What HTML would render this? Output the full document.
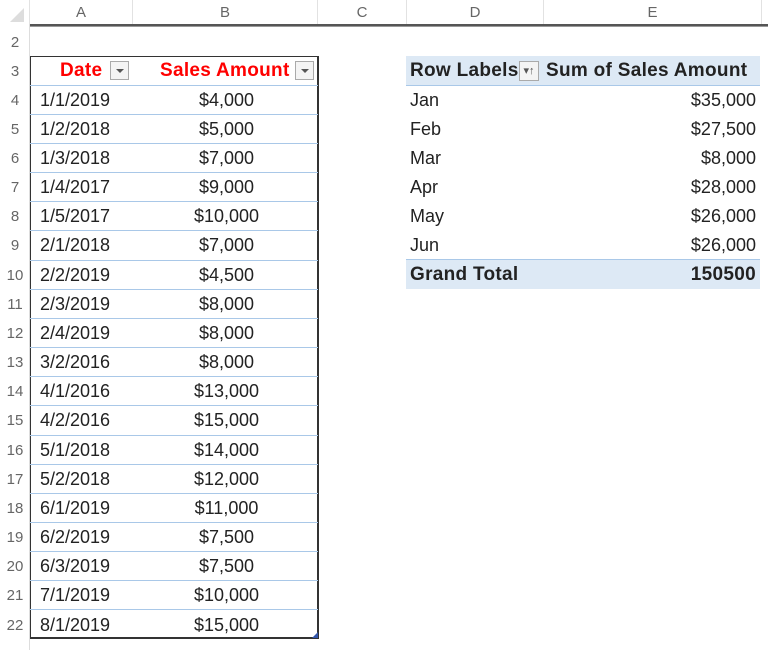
<!DOCTYPE html>
<html><head><meta charset="utf-8"><style>
body{margin:0;width:768px;height:650px;background:#fff;position:relative;overflow:hidden;font-family:"Liberation Sans",Arial,sans-serif;font-size:18px;color:#222}
div{position:absolute;box-sizing:border-box}
.ch{top:0;height:25px;color:#666;font-size:15px;text-align:center;line-height:25px;border-right:1px solid #e2e2e2}
.rn{left:0;width:30px;color:#666;font-size:15px;text-align:center;margin-top:2px}
.sep{left:30px;width:288px;height:1px;background:#a9c8e8}
.t{white-space:nowrap}
.b{font-weight:bold;font-size:19px;letter-spacing:0.3px}
.dd{width:19px;height:19px;border:1px solid #aaa;background:#f4f4f4}
.dd:after{content:"";position:absolute;left:5px;top:7px;border-left:4px solid transparent;border-right:4px solid transparent;border-top:4px solid #555}
</style></head><body>
<div style="left:0;top:0;width:30px;height:25px;border-right:1px solid #e2e2e2"></div>
<div style="left:10px;top:8px;width:0;height:0;border-left:14px solid transparent;border-bottom:14px solid #ddd"></div>
<div class="ch" style="left:30px;width:103px">A</div>
<div class="ch" style="left:133px;width:185px">B</div>
<div class="ch" style="left:318px;width:89px">C</div>
<div class="ch" style="left:407px;width:137px">D</div>
<div class="ch" style="left:544px;width:218px">E</div>
<div style="left:30px;top:24px;width:738px;height:3px;background:#555;border-bottom:1px solid #999"></div>
<div style="left:29px;top:24px;width:1px;height:626px;background:#ddd"></div>
<div class="rn" style="top:32px">2</div>
<div style="left:30px;top:56px;width:289px;height:583px;border:1px solid #333;border-right-width:2px;border-bottom-width:2px"></div>
<div style="left:312px;top:632px;width:0;height:0;border-left:6px solid transparent;border-bottom:6px solid #3355aa"></div>
<div class="rn" style="top:61px">3</div>
<div class="t b" style="left:60px;top:60px;color:#f00">Date</div>
<div class="dd" style="left:110px;top:61px"></div>
<div class="t b" style="left:160px;top:60px;color:#f00">Sales Amount</div>
<div class="dd" style="left:295px;top:61px"></div>
<div class="sep" style="top:85px"></div>

<div class="rn" style="top:90px">4</div><div class="t" style="left:40px;top:90px">1/1/2019</div><div class="t" style="left:135px;width:183px;text-align:center;top:90px">$4,000</div><div class="sep" style="top:114px"></div>
<div class="rn" style="top:119px">5</div><div class="t" style="left:40px;top:119px">1/2/2018</div><div class="t" style="left:135px;width:183px;text-align:center;top:119px">$5,000</div><div class="sep" style="top:143px"></div>
<div class="rn" style="top:148px">6</div><div class="t" style="left:40px;top:148px">1/3/2018</div><div class="t" style="left:135px;width:183px;text-align:center;top:148px">$7,000</div><div class="sep" style="top:172px"></div>
<div class="rn" style="top:177px">7</div><div class="t" style="left:40px;top:177px">1/4/2017</div><div class="t" style="left:135px;width:183px;text-align:center;top:177px">$9,000</div><div class="sep" style="top:201px"></div>
<div class="rn" style="top:206px">8</div><div class="t" style="left:40px;top:206px">1/5/2017</div><div class="t" style="left:135px;width:183px;text-align:center;top:206px">$10,000</div><div class="sep" style="top:230px"></div>
<div class="rn" style="top:235px">9</div><div class="t" style="left:40px;top:235px">2/1/2018</div><div class="t" style="left:135px;width:183px;text-align:center;top:235px">$7,000</div><div class="sep" style="top:260px"></div>
<div class="rn" style="top:265px">10</div><div class="t" style="left:40px;top:265px">2/2/2019</div><div class="t" style="left:135px;width:183px;text-align:center;top:265px">$4,500</div><div class="sep" style="top:289px"></div>
<div class="rn" style="top:294px">11</div><div class="t" style="left:40px;top:294px">2/3/2019</div><div class="t" style="left:135px;width:183px;text-align:center;top:294px">$8,000</div><div class="sep" style="top:318px"></div>
<div class="rn" style="top:323px">12</div><div class="t" style="left:40px;top:323px">2/4/2019</div><div class="t" style="left:135px;width:183px;text-align:center;top:323px">$8,000</div><div class="sep" style="top:347px"></div>
<div class="rn" style="top:352px">13</div><div class="t" style="left:40px;top:352px">3/2/2016</div><div class="t" style="left:135px;width:183px;text-align:center;top:352px">$8,000</div><div class="sep" style="top:376px"></div>
<div class="rn" style="top:381px">14</div><div class="t" style="left:40px;top:381px">4/1/2016</div><div class="t" style="left:135px;width:183px;text-align:center;top:381px">$13,000</div><div class="sep" style="top:405px"></div>
<div class="rn" style="top:410px">15</div><div class="t" style="left:40px;top:410px">4/2/2016</div><div class="t" style="left:135px;width:183px;text-align:center;top:410px">$15,000</div><div class="sep" style="top:435px"></div>
<div class="rn" style="top:440px">16</div><div class="t" style="left:40px;top:440px">5/1/2018</div><div class="t" style="left:135px;width:183px;text-align:center;top:440px">$14,000</div><div class="sep" style="top:464px"></div>
<div class="rn" style="top:469px">17</div><div class="t" style="left:40px;top:469px">5/2/2018</div><div class="t" style="left:135px;width:183px;text-align:center;top:469px">$12,000</div><div class="sep" style="top:493px"></div>
<div class="rn" style="top:498px">18</div><div class="t" style="left:40px;top:498px">6/1/2019</div><div class="t" style="left:135px;width:183px;text-align:center;top:498px">$11,000</div><div class="sep" style="top:522px"></div>
<div class="rn" style="top:527px">19</div><div class="t" style="left:40px;top:527px">6/2/2019</div><div class="t" style="left:135px;width:183px;text-align:center;top:527px">$7,500</div><div class="sep" style="top:551px"></div>
<div class="rn" style="top:556px">20</div><div class="t" style="left:40px;top:556px">6/3/2019</div><div class="t" style="left:135px;width:183px;text-align:center;top:556px">$7,500</div><div class="sep" style="top:580px"></div>
<div class="rn" style="top:585px">21</div><div class="t" style="left:40px;top:585px">7/1/2019</div><div class="t" style="left:135px;width:183px;text-align:center;top:585px">$10,000</div><div class="sep" style="top:609px"></div>
<div class="rn" style="top:615px">22</div><div class="t" style="left:40px;top:615px">8/1/2019</div><div class="t" style="left:135px;width:183px;text-align:center;top:615px">$15,000</div>

<div style="left:406px;top:56px;width:354px;height:30px;background:#dde9f5;border-bottom:1px solid #a9c8e8"></div>
<div class="t b" style="left:410px;top:60px">Row Labels</div>
<div style="left:519px;top:61px;width:20px;height:20px;border:1px solid #aaa;background:#f4f4f4;font-size:11px;line-height:18px;text-align:center;color:#555">&#9662;&#8593;</div>
<div class="t b" style="left:546px;top:60px">Sum of Sales Amount</div>
<div class="t" style="left:410px;top:90px">Jan</div><div class="t" style="left:560px;width:196px;text-align:right;top:90px">$35,000</div>
<div class="t" style="left:410px;top:119px">Feb</div><div class="t" style="left:560px;width:196px;text-align:right;top:119px">$27,500</div>
<div class="t" style="left:410px;top:148px">Mar</div><div class="t" style="left:560px;width:196px;text-align:right;top:148px">$8,000</div>
<div class="t" style="left:410px;top:177px">Apr</div><div class="t" style="left:560px;width:196px;text-align:right;top:177px">$28,000</div>
<div class="t" style="left:410px;top:206px">May</div><div class="t" style="left:560px;width:196px;text-align:right;top:206px">$26,000</div>
<div class="t" style="left:410px;top:235px">Jun</div><div class="t" style="left:560px;width:196px;text-align:right;top:235px">$26,000</div>
<div style="left:406px;top:259px;width:354px;height:30px;background:#dde9f5;border-top:1px solid #a9c8e8"></div>
<div class="t b" style="left:410px;top:264px">Grand Total</div>
<div class="t b" style="left:560px;width:196px;text-align:right;top:264px">150500</div>
</body></html>
